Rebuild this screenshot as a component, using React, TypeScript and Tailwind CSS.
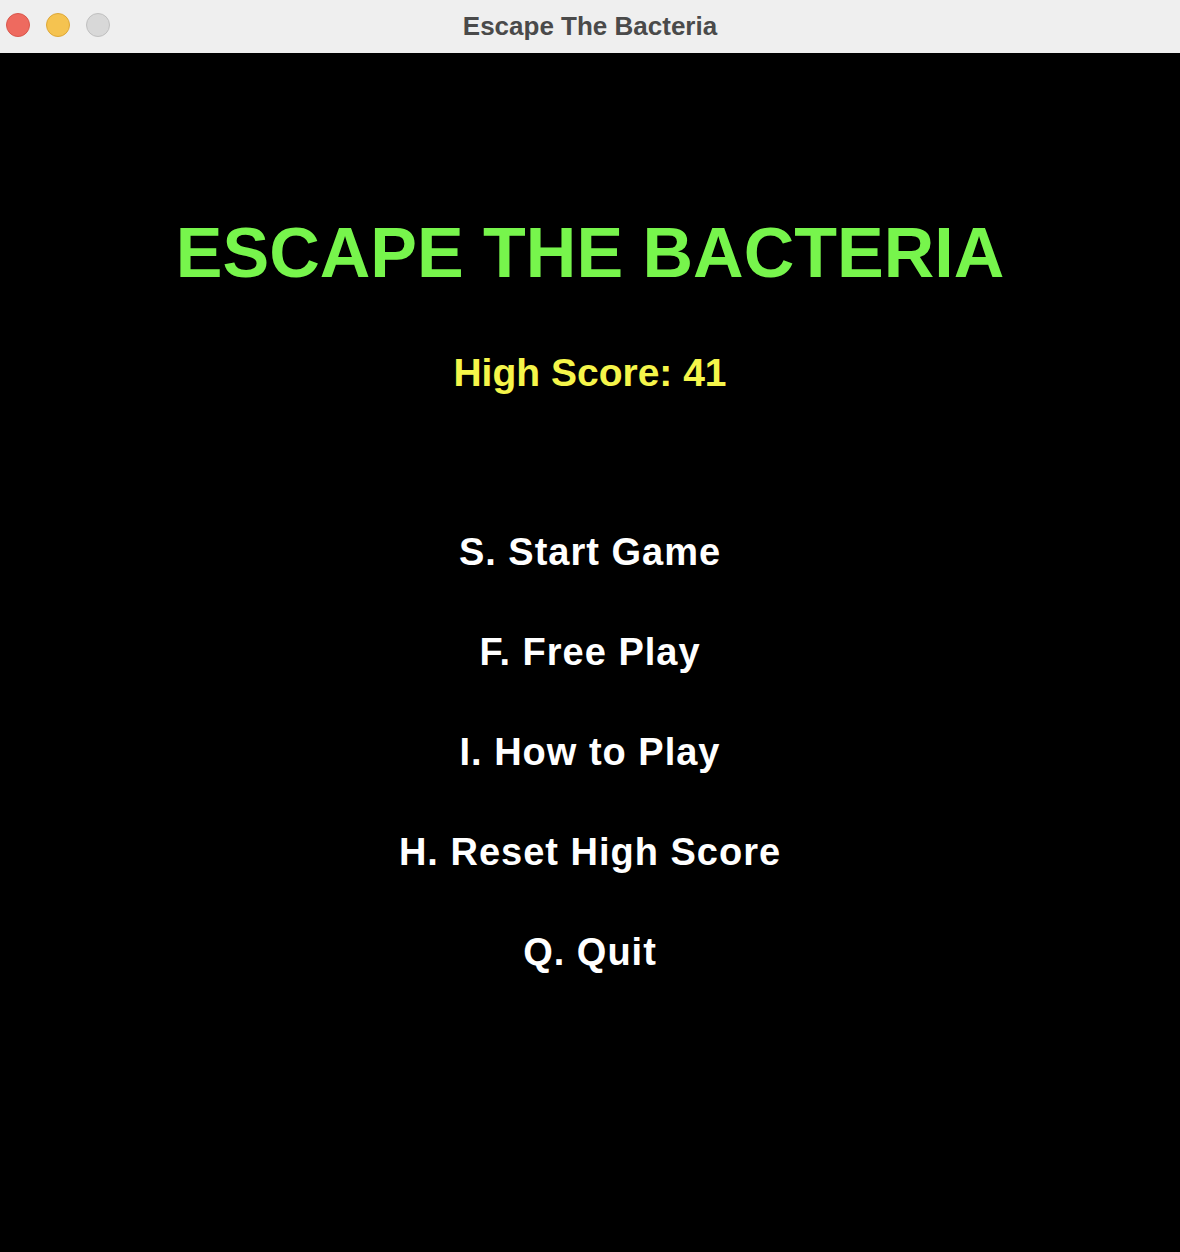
export default function App() {
    const menu = [
        'S. Start Game',
        'F. Free Play',
        'I. How to Play',
        'H. Reset High Score',
        'Q. Quit',
    ];

    return (
        <div className="w-[1180px] h-[1252px] flex flex-col bg-black overflow-hidden">
            {/* window title bar */}
            <div className="relative h-[53px] shrink-0 bg-[#efefef] flex items-center justify-center">
                <div className="absolute left-[6px] top-[13px] flex gap-[16px]">
                    <span className="w-[24px] h-[24px] rounded-full bg-[#ee6a5f] border border-[#d9574c]" />
                    <span className="w-[24px] h-[24px] rounded-full bg-[#f5c350] border border-[#dea838]" />
                    <span className="w-[24px] h-[24px] rounded-full bg-[#d8d8d8] border border-[#c0c0c0]" />
                </div>
                <span className="text-[26px] font-bold text-[#4a4a4a] font-['Liberation_Sans',sans-serif]">
                    Escape The Bacteria
                </span>
            </div>

            {/* game menu screen */}
            <div className="flex-1 flex flex-col items-center font-['Liberation_Sans',Arial,sans-serif] font-bold">
                <h1 className="mt-[165px] text-[70px] leading-none text-[#77f54c]">
                    ESCAPE THE BACTERIA
                </h1>
                <p className="mt-[65px] text-[39px] leading-none text-[#f5f54a]">
                    High Score: 41
                </p>
                <ul className="mt-[141px] flex flex-col items-center gap-[62px]">
                    {menu.map((item) => (
                        <li key={item} className="text-[38px] leading-none text-white tracking-[1px]">
                            {item}
                        </li>
                    ))}
                </ul>
            </div>
        </div>
    );
}
